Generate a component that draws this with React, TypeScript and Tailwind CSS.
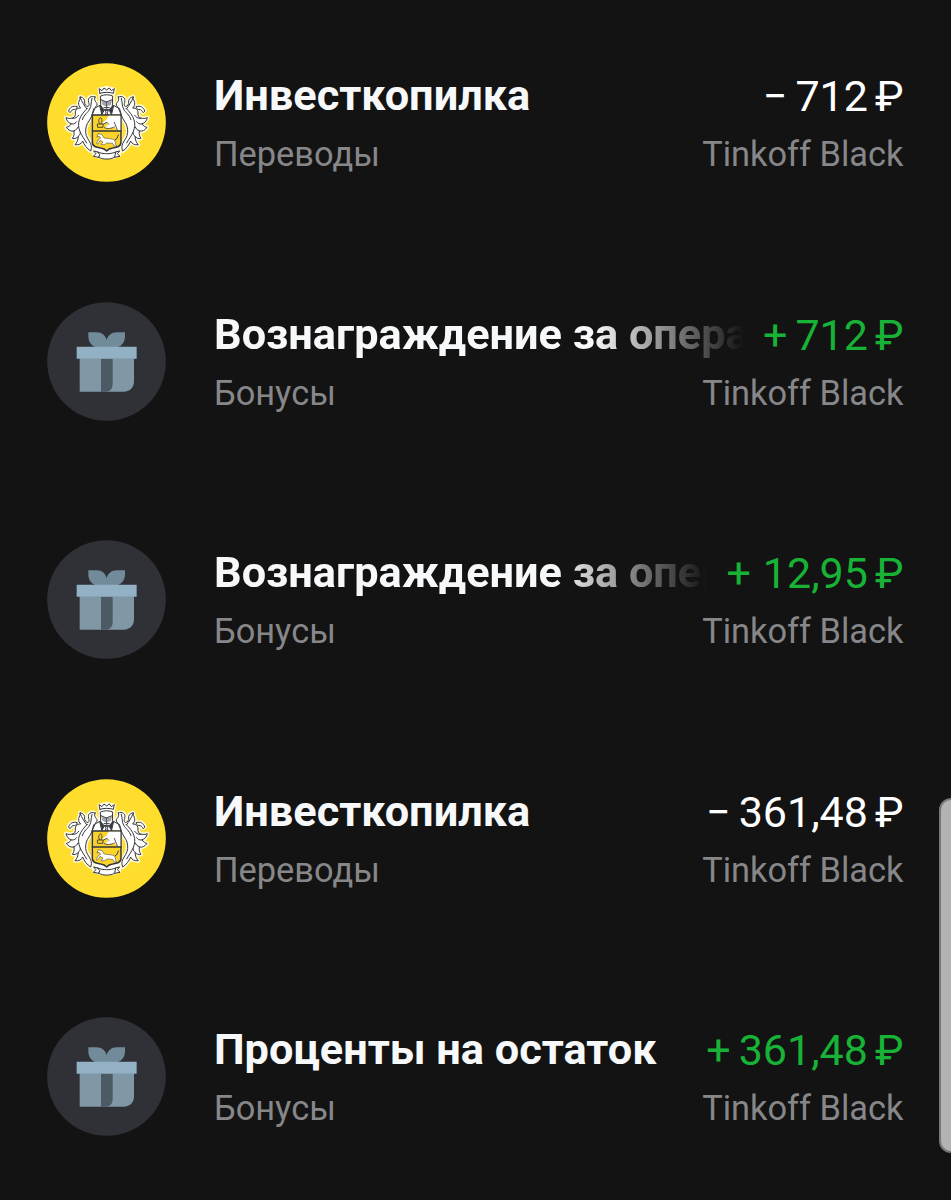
type Operation = {
  id: number;
  icon: "bank" | "gift";
  title: string;
  faded?: boolean;
  category: string;
  sign: string;
  amount: string;
  account: string;
};

const operations: Operation[] = [
  { id: 1, icon: "bank", title: "Инвесткопилка", category: "Переводы", sign: "−", amount: "712", account: "Tinkoff Black" },
  { id: 2, icon: "gift", title: "Вознаграждение за опера", faded: true, category: "Бонусы", sign: "+", amount: "712", account: "Tinkoff Black" },
  { id: 3, icon: "gift", title: "Вознаграждение за опер", faded: true, category: "Бонусы", sign: "+", amount: "12,95", account: "Tinkoff Black" },
  { id: 4, icon: "bank", title: "Инвесткопилка", category: "Переводы", sign: "−", amount: "361,48", account: "Tinkoff Black" },
  { id: 5, icon: "gift", title: "Проценты на остаток", category: "Бонусы", sign: "+", amount: "361,48", account: "Tinkoff Black" },
];

const WING =
  "M166 126C154 121 143 128 147 142C149 148 149 151 145 155C138 153 134 148 135 141C136 134 131 127 121 125C123 132 118 136 117 143C116 150 119 155 123 159C111 159 107 166 107 174C108 182 105 187 99 189C93 191 86 191 79 188C81 198 87 204 95 206C91 213 86 216 80 217C86 226 94 230 103 228C104 238 103 244 98 250C105 252 112 249 116 244C115 256 112 263 106 269C117 271 126 266 129 258C134 270 142 281 153 288C156 280 156 274 153 266C147 254 139 246 138 233C137 218 141 207 148 198C153 190 156 184 158 176L162 162C166 156 174 153 172 146C169 140 162 137 166 126Z";
const LEAF = "M87 167C91 157 99 151 113 155C112 162 106 164 100 164C96 165 94 169 92 172Z";

function Wing() {
  return (
    <g>
      <path d={LEAF} />
      <path d={WING} />
      <path
        d="M121 127C128 142 134 152 141 161M143 160C121 181 109 203 122 232C126 241 134 252 141 264M98 190C107 191 113 187 117 181M96 207C104 208 108 204 111 200M103 227C110 225 113 221 115 216M116 244C121 240 122 236 122 232M157 130C153 143 156 153 150 162C145 173 133 178 128 194"
        fill="none"
      />
    </g>
  );
}

function BankIcon() {
  return (
    <svg viewBox="22 24 357 357" className="size-[119px] shrink-0">
      <circle cx="200.5" cy="202.5" r="178" fill="#ffdd2d" />
      {/* light halo under the crest */}
      <g fill="#fff" stroke="#fffbe0" strokeWidth="12" strokeLinejoin="round">
        <path d={WING} />
        <path d={LEAF} />
        <g transform="translate(402 0) scale(-1 1)">
          <path d={WING} />
          <path d={LEAF} />
        </g>
        <path d="M179 103L193 100L201 98L209 100L223 103L220 119L219 150L242 180V274L238 300L222 306H180L164 300L160 274V180L183 150L182 119Z" />
      </g>
      <g fill="#fff" stroke="#34363d" strokeWidth="3" strokeLinejoin="round" strokeLinecap="round">
        <Wing />
        <g transform="translate(402 0) scale(-1 1)">
          <Wing />
        </g>
        {/* shoulders */}
        <path d="M181 151L166 159L157 181H245L236 159L221 151L211 164H191Z" />
        <path d="M181 153L193 166L187 178ZM221 153L209 166L215 178Z" fill="#34363d" />
        {/* helmet and crown */}
        <path d="M183 123C192 118 210 118 219 123L218 153L209 164H193L184 153Z" />
        <path d="M185 137L199 142V154L189 150ZM217 137L203 142V154L213 150Z" fill="#a2a4a9" stroke="none" />
        <path d="M184 134L200 141L218 134M201 141V160M193 158H209" fill="none" />
        <path d="M181 115L178 101L187 107L193 99L201 105L209 99L215 107L224 101L221 115C210 111 192 111 181 115Z" />
        <path d="M196 166H206L203 172L205 180H197L199 172Z" />
        {/* shield */}
        <path d="M158 180H244V262C244 275 232 277 219 279C210 280 205 283 201 288C197 283 192 280 183 279C170 277 158 275 158 262Z" fill="#fbd32b" strokeWidth="4.5" />
        <path d="M207 182H242V226H233L224 216C212 221 202 222 194 217L204 213L201 201L191 207L187 204L200 194Z" stroke="none" />
        <path
          d="M224 202L233 225M191 207L202 202L207 208M194 218C205 223 215 220 224 216M174 207H190V217H175ZM180 206C175 199 177 190 183 188C189 194 188 201 184 206"
          fill="none"
          strokeWidth="2.5"
        />
        <path d="M158 228H244" fill="none" strokeWidth="4" />
        <path
          d="M177 236L187 239L193 249L217 252C225 253 229 260 227 268L232 273H223L219 265L202 264L194 269H184L190 261L181 256L177 263L173 268L171 263L177 253L183 250L179 244L173 246Z"
          strokeWidth="1.5"
        />
        <path d="M226 255C233 253 233 246 236 240" fill="none" />
        {/* ribbon */}
        <path d="M163 288L174 291L181 295L178 307L161 304L168 297Z" />
        <path d="M239 288L228 291L221 295L224 307L241 304L234 297Z" />
        <path d="M174 291C190 298 212 298 228 291L225 307C210 314 192 314 177 307L180 300Z" />
      </g>
    </svg>
  );
}

function GiftIcon() {
  return (
    <svg viewBox="22 19 357 357" className="size-[119px] shrink-0">
      <circle cx="200.5" cy="197.5" r="178" fill="#303137" />
      <path d="M146 110H170C187 110 198 120 201 134C204 120 215 110 232 110H256V121C256 139 247 150 233 155H169C155 150 146 139 146 121Z" fill="#728b9a" />
      <path d="M120 188H283V257C283 276 271 288 252 288H120Z" fill="#8097a6" />
      <path d="M184 188H219V264C219 280 210 288 196 288H184Z" fill="#4c5a65" />
      <path d="M111 153H291V189H111Z" fill="#92b1c5" />
    </svg>
  );
}

function OperationRow({ operation }: { operation: Operation }) {
  const income = operation.sign === "+";

  return (
    <li className="flex h-[238.5px] items-start pl-[47px] pr-[47.5px]">
      {operation.icon === "bank" ? <BankIcon /> : <GiftIcon />}
      <div className="ml-12 min-w-0 flex-1 pt-[7px]">
        <div className="flex h-[52px] items-center justify-between gap-[19px] text-[43px] leading-[52px]">
          <h2
            className={
              "min-w-0 overflow-hidden whitespace-nowrap text-[43.3px] font-bold text-[#f7f8fa] " +
              (operation.faded ? "flex-1 [mask-image:linear-gradient(to_left,transparent,black_150px)]" : "")
            }
          >
            {operation.title}
          </h2>
          <p className={"flex shrink-0 whitespace-nowrap " + (income ? "text-[#17b236]" : "text-white")}>
            <span>{operation.sign}</span>
            <span className={operation.amount.startsWith("1") ? "ml-3" : "ml-2"}>{operation.amount}</span>
            <span className="ml-[7px]">₽</span>
          </p>
        </div>
        <div className="mt-[10px] flex justify-between text-[34.4px] leading-[44px] text-[#87878a]">
          <span>{operation.category}</span>
          <span>{operation.account}</span>
        </div>
      </div>
    </li>
  );
}

export default function App() {
  return (
    <main className="relative h-[1200px] w-[951px] overflow-hidden bg-[#131313] pt-[63px] font-['Roboto',sans-serif]">
      <ul>
        {operations.map((operation) => (
          <OperationRow key={operation.id} operation={operation} />
        ))}
      </ul>
      {/* edge panel handle */}
      <div className="absolute -right-3 top-[798px] h-[355px] w-6 rounded-[14px] border-2 border-[#777] bg-[#b3b3b3]" />
    </main>
  );
}
